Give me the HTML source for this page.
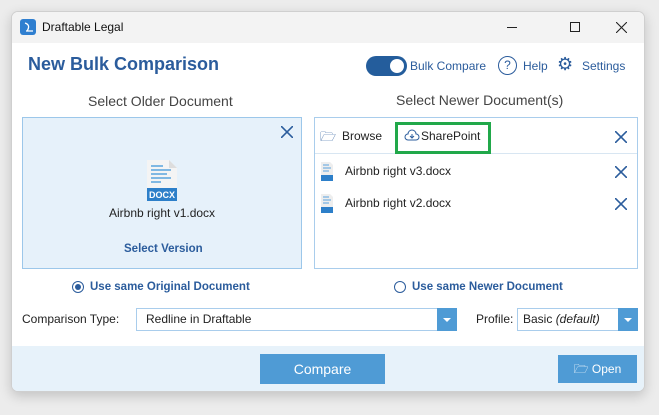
<!DOCTYPE html>
<html><head><style>
*{margin:0;padding:0;box-sizing:border-box}
body{width:659px;height:415px;background:#ececec;font-family:"Liberation Sans",sans-serif;position:relative;overflow:hidden;font-size:12px;color:#222}
.win{position:absolute;left:11px;top:11px;width:634px;height:381px;background:#fff;border:1px solid #cfcfcf;border-radius:7px;overflow:hidden;box-shadow:0 4px 12px rgba(0,0,0,.18)}
.tb{position:absolute;left:0;top:0;width:100%;height:31px;background:#f3f3f3}
.a{position:absolute;white-space:nowrap}
.foot{position:absolute;left:0;top:334px;width:100%;height:47px;background:#e7f2fa}
.btn{position:absolute;background:#4f9bd5;color:#fff;text-align:center}
</style></head><body>
<div class="win">
 <div class="tb"></div>
 <div class="a" style="left:8px;top:7px;width:16px;height:16px;background:#2f7fd0;border-radius:3px"></div>
 <svg class="a" style="left:8px;top:7px" width="16" height="16"><path d="M5 4 Q11 6 7 12 M6 12 H13" stroke="#fff" fill="none" stroke-width="1.3"/></svg>
 <div class="a" style="left:30px;top:8px;font-size:12px;color:#111">Draftable Legal</div>
 <div class="a" style="left:495px;top:15px;width:10px;height:1px;background:#222"></div>
 <div class="a" style="left:558px;top:10px;width:10px;height:10px;border:1px solid #222"></div>
 <svg class="a" style="left:604px;top:10px" width="11" height="11"><path d="M0 0L11 11M11 0L0 11" stroke="#222" stroke-width="1.1"/></svg>

 <div class="a" style="left:16px;top:42px;font-size:18px;font-weight:bold;color:#2b5c9c">New Bulk Comparison</div>
 <div class="a" style="left:354px;top:44px;width:41px;height:20px;border-radius:10px;background:#245d9c"></div>
 <div class="a" style="left:378px;top:47px;width:14px;height:14px;border-radius:7px;background:#fff"></div>
 <div class="a" style="left:398px;top:47px;color:#2b5c9c">Bulk Compare</div>
 <div class="a" style="left:486px;top:44px;width:19px;height:19px;border:1.5px solid #2b5c9c;border-radius:50%;text-align:center;line-height:16px;color:#2b5c9c;font-size:12px">?</div>
 <div class="a" style="left:511px;top:47px;color:#2b5c9c">Help</div>
 <div class="a" style="left:545px;top:42px;font-size:18px;color:#2b5c9c">⚙</div>
 <div class="a" style="left:570px;top:47px;color:#2b5c9c">Settings</div>

 <div class="a" style="left:76px;top:81px;font-size:14px;color:#444">Select Older Document</div>
 <div class="a" style="left:384px;top:80px;font-size:14px;color:#444">Select Newer Document(s)</div>

 <div class="a" style="left:10px;top:105px;width:280px;height:152px;background:#e6f1fa;border:1px solid #9cc7ea"></div>
 <svg class="a" style="left:269px;top:114px" width="12" height="12"><path d="M0 0L12 12M12 0L0 12" stroke="#2b5c9c" stroke-width="1.6"/></svg>
 <svg class="a" style="left:134px;top:148px" width="32" height="42"><path d="M1 0H23L31 8V30H1Z" fill="#f4f4f4"/><path d="M23 0V8H31" fill="#ddd"/><path d="M5 6h12M5 10h20M5 14h16M5 18h20M5 22h10" stroke="#5aa3dd" stroke-width="1.5"/><rect x="1" y="28" width="30" height="13" fill="#2d7fc9"/><text x="16" y="38" fill="#fff" font-size="9" font-weight="bold" text-anchor="middle" font-family="Liberation Sans">DOCX</text></svg>
 <div class="a" style="left:97px;top:194px;color:#222">Airbnb right v1.docx</div>
 <div class="a" style="left:112px;top:231px;color:#2b5c9c;font-weight:bold;font-size:11.5px">Select Version</div>

 <div class="a" style="left:302px;top:105px;width:324px;height:152px;background:#fff;border:1px solid #a9cdec"></div>
 <div class="a" style="left:303px;top:141px;width:322px;height:1px;background:#d8e6f2"></div>
 <div class="a" style="left:308px;top:116px;font-size:13px;color:#2b5c9c">🗁</div>
 <div class="a" style="left:330px;top:117px;color:#222">Browse</div>
 <div class="a" style="left:383px;top:110px;width:96px;height:32px;border:3px solid #21a84a"></div>
 <svg class="a" style="left:392px;top:117px" width="16" height="12"><path d="M4 11H12A3 3 0 0 0 12 5A4 4 0 0 0 4 5A3 3 0 0 0 4 11Z M8 5V9M6 7L8 9L10 7" stroke="#2b5c9c" fill="none" stroke-width="1"/></svg>
 <div class="a" style="left:409px;top:117px;color:#222">SharePoint</div>
 <svg class="a" style="left:603px;top:119px" width="12" height="12"><path d="M0 0L12 12M12 0L0 12" stroke="#2b5c9c" stroke-width="1.6"/></svg>

 <svg class="a" style="left:308px;top:150px" width="14" height="20"><path d="M1 0H10L13 3V13H1Z" fill="#eee"/><path d="M3 3h6M3 6h8M3 9h6" stroke="#5aa3dd"/><rect x="1" y="13" width="12" height="6" fill="#2d7fc9"/></svg>
 <div class="a" style="left:333px;top:152px;color:#222">Airbnb right v3.docx</div>
 <svg class="a" style="left:603px;top:154px" width="12" height="12"><path d="M0 0L12 12M12 0L0 12" stroke="#2b5c9c" stroke-width="1.6"/></svg>
 <svg class="a" style="left:308px;top:182px" width="14" height="20"><path d="M1 0H10L13 3V13H1Z" fill="#eee"/><path d="M3 3h6M3 6h8M3 9h6" stroke="#5aa3dd"/><rect x="1" y="13" width="12" height="6" fill="#2d7fc9"/></svg>
 <div class="a" style="left:333px;top:184px;color:#222">Airbnb right v2.docx</div>
 <svg class="a" style="left:603px;top:186px" width="12" height="12"><path d="M0 0L12 12M12 0L0 12" stroke="#2b5c9c" stroke-width="1.6"/></svg>

 <div class="a" style="left:60px;top:269px;width:12px;height:12px;border:1px solid #2b5c9c;border-radius:50%"></div>
 <div class="a" style="left:63px;top:272px;width:6px;height:6px;background:#2b5c9c;border-radius:50%"></div>
 <div class="a" style="left:78px;top:269px;color:#2b5c9c;font-weight:bold;font-size:11.5px">Use same Original Document</div>
 <div class="a" style="left:382px;top:269px;width:12px;height:12px;border:1px solid #2b5c9c;border-radius:50%"></div>
 <div class="a" style="left:400px;top:269px;color:#2b5c9c;font-weight:bold;font-size:11.5px">Use same Newer Document</div>

 <div class="a" style="left:10px;top:300px;color:#222">Comparison Type:</div>
 <div class="a" style="left:124px;top:296px;width:321px;height:23px;border:1px solid #a9cdec;background:#fff"></div>
 <div class="a" style="left:134px;top:300px;color:#222">Redline in Draftable</div>
 <div class="a" style="left:425px;top:296px;width:20px;height:23px;background:#4f9bd5"></div>
 <div class="a" style="left:431px;top:306px;border-left:4px solid transparent;border-right:4px solid transparent;border-top:4px solid #fff"></div>
 <div class="a" style="left:464px;top:300px;color:#222">Profile:</div>
 <div class="a" style="left:505px;top:296px;width:121px;height:23px;border:1px solid #a9cdec;background:#fff"></div>
 <div class="a" style="left:511px;top:300px;color:#222">Basic <i>(default)</i></div>
 <div class="a" style="left:606px;top:296px;width:20px;height:23px;background:#4f9bd5"></div>
 <div class="a" style="left:612px;top:306px;border-left:4px solid transparent;border-right:4px solid transparent;border-top:4px solid #fff"></div>

 <div class="foot"></div>
 <div class="btn" style="left:248px;top:342px;width:125px;height:30px;line-height:30px;font-size:14px">Compare</div>
 <div class="btn" style="left:546px;top:343px;width:79px;height:28px;line-height:28px;font-size:12px">🗁 Open</div>
</div>
</body></html>
